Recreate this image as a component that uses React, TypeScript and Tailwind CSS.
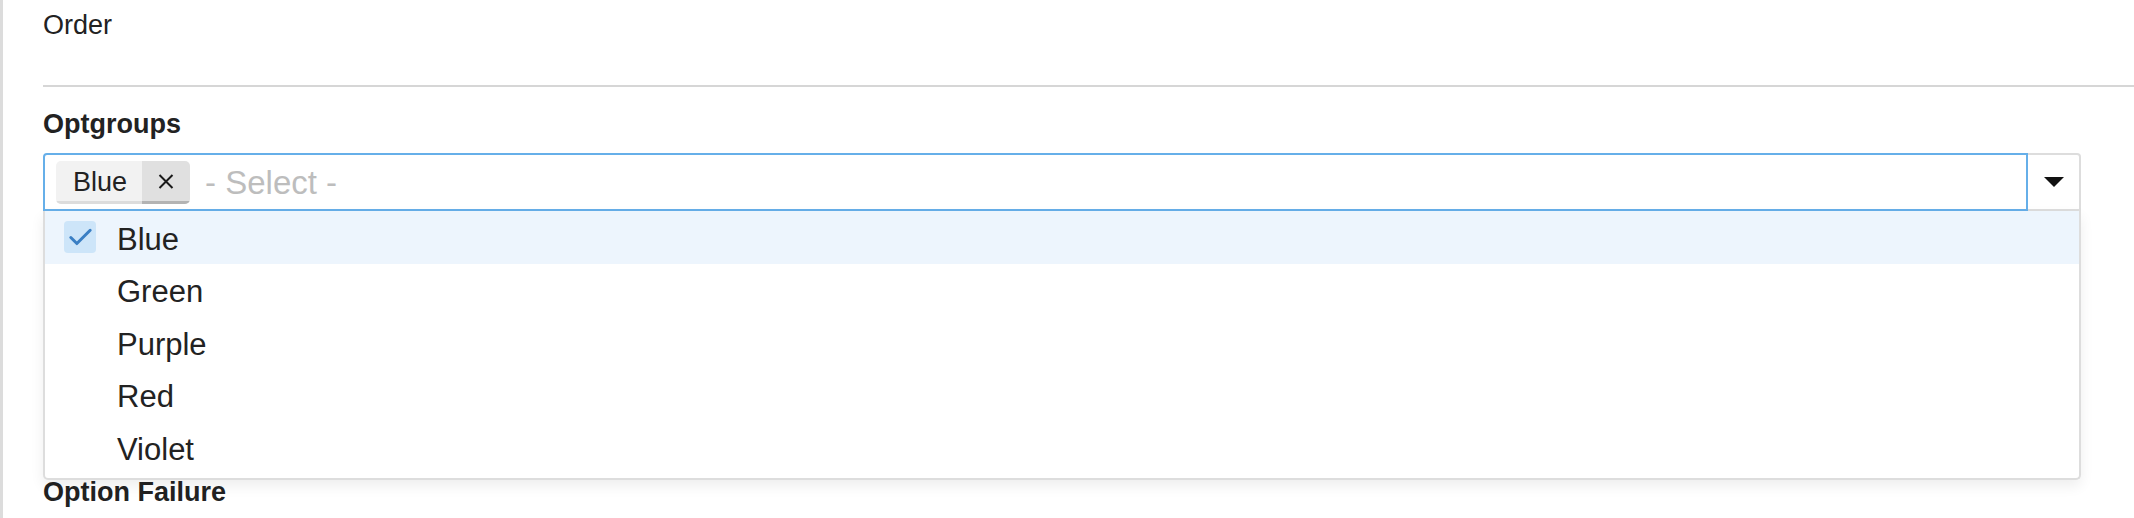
import { Check } from 'lucide-react';

// Multi-select demo: a tag field with its option list open
const options = ['Blue', 'Green', 'Purple', 'Red', 'Violet'];
const selected = ['Blue'];

const Caret = () => (
  <svg width="20" height="10" viewBox="0 0 20 10" aria-hidden="true">
    <polygon points="0,0 20,0 10,10" fill="#111" />
  </svg>
);

const Cross = () => (
  <svg width="16" height="15" viewBox="0 0 16 15" aria-hidden="true">
    <path d="M1.5 1 L14.5 14 M14.5 1 L1.5 14" stroke="#1a1a1a" strokeWidth="2" fill="none" />
  </svg>
);

const Tag = (props: { label: string }) => {
  return (
    <div className="flex h-[43px] overflow-hidden rounded-[5px]">
      <div className="h-[43px] border-b-[3px] border-[#dcdcdc] bg-[#f2f2f2] pl-[17px] pr-[15px] pt-[2px] text-[27px] leading-[38px]">
        {props.label}
      </div>
      <div className="flex h-[43px] w-[48px] items-center justify-center border-b-[3px] border-[#b3b3b3] bg-[#e0e0e0] pt-[1px]">
        <Cross />
      </div>
    </div>
  );
};

const OptionRow = (props: { label: string; checked: boolean }) => {
  return (
    <div
      className={
        props.checked
          ? 'flex h-[52.5px] items-center bg-[#edf5fd] pl-[19px]'
          : 'flex h-[52.5px] items-center pl-[19px]'
      }
    >
      <div className="flex h-[32px] w-[32px] items-center justify-center rounded-[4px]">
        {props.checked && (
          <div className="flex h-[32px] w-[32px] items-center justify-center rounded-[4px] bg-[#cde5f9]">
            <Check size={29} strokeWidth={2.5} color="#3a7fc4" />
          </div>
        )}
      </div>
      <div className="ml-[21px] pt-[4px] text-[31px] leading-[49px]">
        {props.label}
      </div>
    </div>
  );
};

export default function App() {
  return (
    <div className="min-h-screen border-l-[3px] border-[#dcdcdc] bg-white pl-[40px] pr-[53px] font-['Liberation_Sans',Arial,sans-serif] text-[#222]">
      {/* Order */}
      <div className="pt-[6px] text-[27px] leading-[38px]">Order</div>
      <div className="-mr-[53px] mt-[41px] border-t-2 border-[#d6d6d6]" />

      {/* Optgroups */}
      <div className="mt-[18px] text-[27px] font-bold leading-[38px]">Optgroups</div>
      <div className="relative mt-[10px]">
        <div className="flex h-[58px]">
          <div className="flex flex-1 items-center rounded-tl-[4px] border-2 border-[#66afe9] pl-[11px]">
            {selected.map((s) => (
              <Tag key={s} label={s} />
            ))}
            <div className="ml-[15px] pt-[2px] text-[33px] leading-[52px] text-[#bdbdbd]">- Select -</div>
          </div>
          <div className="flex w-[53px] items-center justify-center rounded-tr-[4px] border-y-2 border-r-2 border-[#dddddd]">
            <Caret />
          </div>
        </div>

        {/* open option list */}
        <div className="absolute left-0 right-0 top-full z-10 rounded-b-[5px] border-x-2 border-b-2 border-[#dddddd] bg-white pb-[4px] shadow-[0_6px_14px_rgba(0,0,0,0.07)]">
          {options.map((o) => (
            <OptionRow key={o} label={o} checked={selected.includes(o)} />
          ))}
        </div>
      </div>

      {/* Option Failure */}
      <div className="mt-[262px] text-[27px] font-bold leading-[38px]">Option Failure</div>
    </div>
  );
}
